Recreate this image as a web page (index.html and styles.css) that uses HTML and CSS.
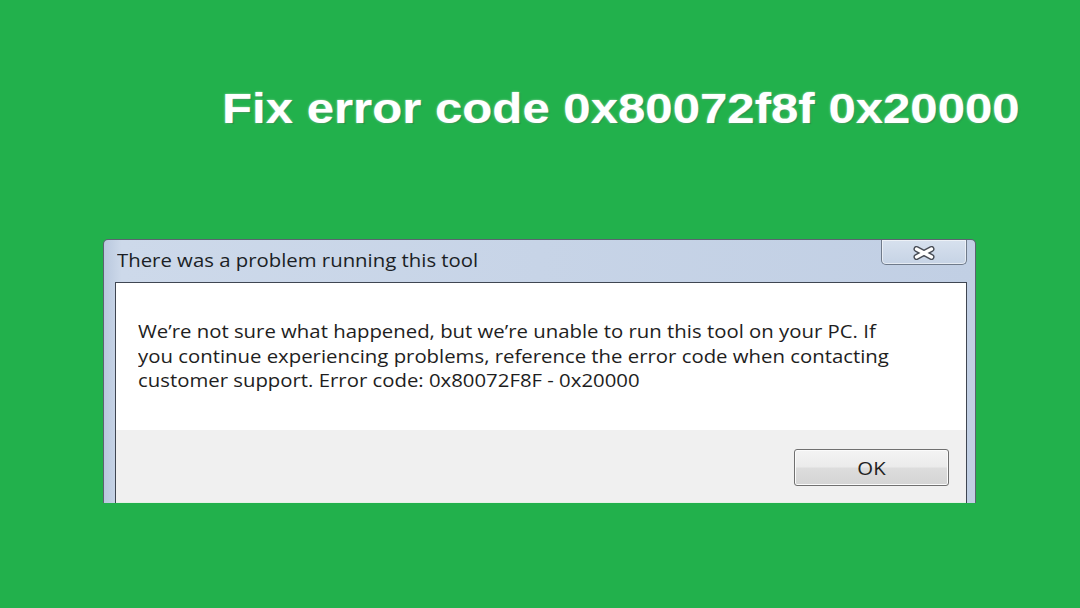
FILE: index.html
```html
<!DOCTYPE html>
<html lang="en">
<head>
<meta charset="utf-8">
<title>Fix error code 0x80072f8f 0x20000</title>
<link rel="stylesheet" href="styles.css">
</head>
<body>
<div class="page">
  <h1 class="headline"><span class="headline-text">Fix error code 0x80072f8f 0x20000</span></h1>
  <div class="dialog">
    <div class="titlebar">
      <span class="title wide">There was a problem running this tool</span>
      <button class="close" aria-label="Close">
        <svg width="24" height="14" viewBox="0 0 24 14">
          <g stroke-linecap="round">
            <path d="M4.5 3 L19.5 11 M19.5 3 L4.5 11" stroke="#474c55" stroke-width="6"/>
            <path d="M4.5 3 L19.5 11 M19.5 3 L4.5 11" stroke="#ffffff" stroke-width="3.2"/>
          </g>
        </svg>
      </button>
    </div>
    <div class="client">
      <div class="message">
        <p class="wide">We’re not sure what happened, but we’re unable to run this tool on your PC. If<br>you continue experiencing problems, reference the error code when contacting<br>customer support. Error code: 0x80072F8F - 0x20000</p>
      </div>
      <div class="footer">
        <button class="ok"><span class="ok-label">OK</span></button>
      </div>
    </div>
  </div>
</div>
</body>
</html>
```
FILE: styles.css
```css
html, body {
  margin: 0;
  padding: 0;
}
body {
  width: 1080px;
  height: 608px;
  overflow: hidden;
  background: #22b14c;
}
.page {
  display: flex;
  flex-direction: column;
  padding-top: 88px;
}
.headline {
  margin: 0 0 0 222px;
  height: 42px;
  font-family: "Liberation Sans", Arial, sans-serif;
  font-weight: bold;
  font-size: 42px;
  line-height: 42px;
  color: #ffffff;
  white-space: nowrap;
}
.headline-text {
  display: inline-block;
  transform: scaleX(1.17);
  transform-origin: left center;
  text-shadow: 0 0 2px rgba(255,255,255,0.6), 1px 1px 1px rgba(0,60,20,0.35);
}
.wide {
  display: inline-block;
  transform: scaleX(1.13);
  transform-origin: left top;
  white-space: nowrap;
}
.dialog {
  margin: 109px 0 0 103px;
  width: 873px;
  height: 264px;
  border: 1px solid #5b6370;
  border-bottom: none;
  border-radius: 5px 5px 0 0;
  background: linear-gradient(to right, #b9c8de 0%, #cdd9ea 2%, #c7d4e7 50%, #c1cfe4 100%);
  padding: 0 8px 0 11px;
  box-sizing: border-box;
  display: flex;
  flex-direction: column;
}
.titlebar {
  height: 42px;
  flex: none;
  display: flex;
  justify-content: space-between;
  align-items: flex-start;
}
.title {
  margin: 9px 0 0 2px;
  font-family: "Open Sans", "Noto Sans", sans-serif;
  font-size: 18px;
  line-height: 22px;
  color: #1b1f26;
}
.close {
  width: 86px;
  height: 25px;
  margin: 0;
  padding: 0;
  border: 1px solid #6f7a8a;
  border-top: none;
  border-radius: 0 0 5px 5px;
  background: linear-gradient(#d7e1ee, #c6d3e5);
  box-shadow: inset 0 0 0 1px rgba(255,255,255,0.55);
  display: flex;
  align-items: center;
  justify-content: center;
}
.close svg {
  display: block;
  margin-top: 1px;
}
.client {
  flex: 1;
  display: flex;
  flex-direction: column;
  border: 1px solid #3f4652;
  border-bottom: none;
  background: #ffffff;
}
.message {
  height: 147px;
  flex: none;
  box-sizing: border-box;
  padding: 36px 20px 0 22px;
  background: #ffffff;
}
.message p {
  margin: 0;
  font-family: "Open Sans", "Noto Sans", sans-serif;
  font-size: 18px;
  line-height: 24.5px;
  color: #1e1e1e;
}
.footer {
  flex: 1;
  background: #f0f0f0;
  display: flex;
  justify-content: flex-end;
  align-items: flex-start;
  padding: 19px 17px 0 0;
  border-bottom: 1px solid #e4f2e6;
}
.ok {
  width: 155px;
  height: 37px;
  margin: 0;
  padding: 0;
  border: 1px solid #707070;
  border-radius: 3px;
  background: linear-gradient(#f4f4f4 0%, #ebebeb 48%, #dddddd 52%, #d4d4d4 100%);
  box-shadow: inset 0 0 0 1px #fbfbfb;
  display: flex;
  align-items: center;
  justify-content: center;
}
.ok-label {
  display: inline-block;
  transform: scaleX(1.13);
  font-family: "Open Sans", "Noto Sans", sans-serif;
  font-size: 18px;
  line-height: 22px;
  color: #222222;
}
```
